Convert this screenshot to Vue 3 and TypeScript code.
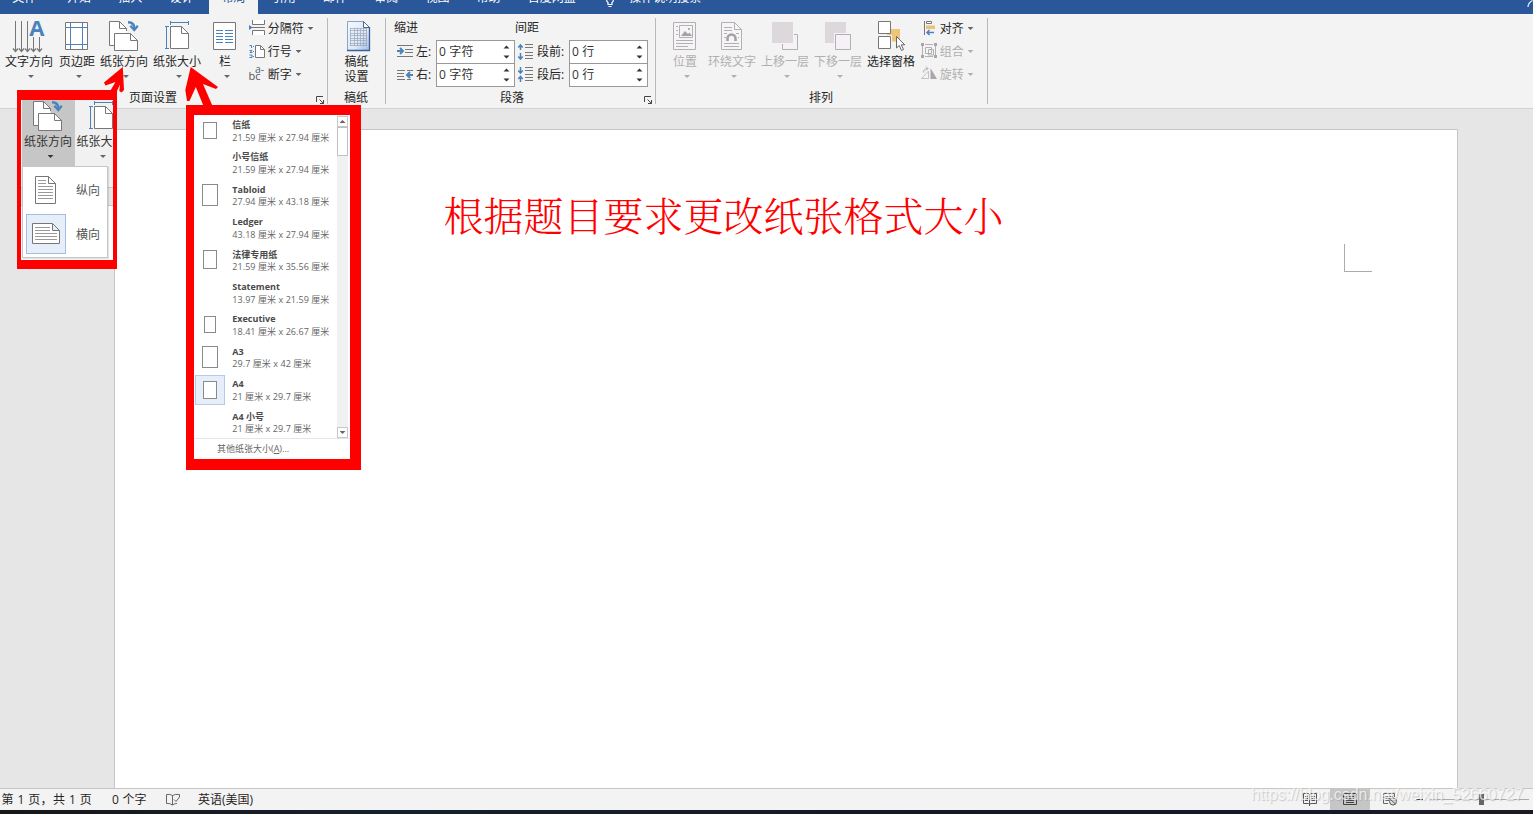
<script setup lang="ts">
interface Shape {
  d?: string
  text?: string
  x?: number
  y?: number
  size?: number
  bold?: boolean
  fill?: string
  stroke?: string
  w?: number
}
interface BigButton {
  label: string
  x: number
  w: number
  caret: boolean
  off?: boolean
  shapes: Shape[]
}
interface SmallButton {
  label: string
  box: string
  off?: boolean
  shapes: Shape[]
}

const G = '#777777'
const B = '#4a82bd'
const D = '#b3b0b3'

const tabs: string[] = ['文件', '开始', '插入', '设计', '布局', '引用', '邮件', '审阅', '视图', '帮助']

const orientation: Shape[] = [
  { d: 'M114 45.5H109.500V21.500H119.500L126.500 28.500V33.500H114.500V45.500Z', fill: '#fff' },
  { d: 'M114 45.500H109.500V21.500H119.500L126.500 28.500V31M119.500 21.500V28.500H126.500', stroke: G },
  { d: 'M114.500 33.500H130.500L137.500 40.500V50.500H114.500Z', fill: '#fff', stroke: G },
  { d: 'M130.500 33.500V40.500H137.500', stroke: G },
  { d: 'M128 22.300Q134.500 22.300 134.500 29', stroke: B, w: 2.4 },
  { d: 'M130.300 25.800L134.300 30L137.800 25.800', stroke: B, w: 2.2 },
]
const paperSize: Shape[] = [
  { d: 'M170 22.500H189M170.500 21V25M188.500 21V25M166.500 26V49M165 26.500H169M165 48.500H169', stroke: B },
  { d: 'M170.500 26.500H181.500L188.500 33.500V48.500H170.500Z', fill: '#fff', stroke: G },
  { d: 'M181.500 26.500V33.500H188.500', stroke: G },
]

const pageButtons: BigButton[] = [
  {
    label: '文字方向', x: 0, w: 58, caret: true,
    shapes: [
      { d: 'M15.500 21V51M21.500 21V51M27.500 21V51M33.500 37V51M39.500 37V51', stroke: G },
      { d: 'M13 48.500L15.500 51.500L18 48.500M19 48.500L21.500 51.500L24 48.500M25 48.500L27.500 51.500L30 48.500M31 48.500L33.500 51.500L36 48.500M37 48.500L39.500 51.500L42 48.500', stroke: G, w: 1.3 },
      { text: 'A', x: 29.2, y: 36, size: 22, bold: true, fill: B },
    ],
  },
  {
    label: '页边距', x: 58, w: 38, caret: true,
    shapes: [
      { d: 'M65.500 22.500H87.500V49.500H65.500Z', fill: '#fff', stroke: G },
      { d: 'M70.500 23V49M82.500 23V49M66 27.500H87M66 44.500H87', stroke: B },
    ],
  },
  { label: '纸张方向', x: 96, w: 56, caret: true, shapes: orientation },
  { label: '纸张大小', x: 152, w: 50, caret: true, shapes: paperSize },
  {
    label: '栏', x: 202, w: 46, caret: true,
    shapes: [
      { d: 'M213.500 22.500H235.500V49.500H213.500Z', fill: '#fff', stroke: G },
      { d: 'M216 30.500H223M225 30.500H233M216 33.500H223M225 33.500H233M216 36.500H223M225 36.500H233M216 39.500H223M225 39.500H233M216 42.500H223M225 42.500H233', stroke: B },
    ],
  },
]

const pageSmall: SmallButton[] = [
  {
    label: '分隔符', box: '248 17 19 23',
    shapes: [
      { d: 'M249 25L252.500 27.500L249 30Z', fill: B },
      { d: 'M252.500 20V24.500H264.500V20ZM252.500 35V30.500H264.500V35Z', fill: '#fff' },
      { d: 'M252.500 20V24.500H264.500V20M252.500 35V30.500H264.500V35M252 27.500H265', stroke: G },
    ],
  },
  {
    label: '行号', box: '248 40 19 23',
    shapes: [
      { d: 'M249.500 45.500H251.500V48M249.500 50.500H252L250 52.500H252.500M249.500 55H252V57.500H249.500M253 46.500H254M253 51.500H254M253 56.500H254', stroke: B },
      { d: 'M255.500 45.500H260.500L264.500 49.500V57.500H255.500Z', fill: '#fff', stroke: G },
      { d: 'M260.500 45.500V49.500H264.500', stroke: G },
    ],
  },
  {
    label: '断字', box: '248 63 19 23',
    shapes: [
      { text: 'bc', x: 248.5, y: 80, size: 11, fill: '#555' },
      { text: 'a-', x: 255, y: 73, size: 10.5, fill: '#4e5f74' },
    ],
  },
]

const arrangeButtons: BigButton[] = [
  {
    label: '位置', x: 664, w: 42, caret: true, off: true,
    shapes: [
      { d: 'M673.500 22.500H695.500V49.500H673.500Z', fill: '#f7f4f7', stroke: D },
      { d: 'M679.500 25.500H692.500V37.500H679.500Z', stroke: D },
      { d: 'M681 36L685 31L688 34L689.500 32.500L692 36Z', fill: '#a5a2a5' },
      { d: 'M688 28H690V30H688Z', fill: D },
      { d: 'M676 26.500H678M676 30.500H678M676 34.500H678M676 40.500H693M676 43.500H693M676 46.500H688', stroke: D },
    ],
  },
  {
    label: '环绕文字', x: 706, w: 52, caret: true, off: true,
    shapes: [
      { d: 'M721.500 22.500H734.500L741.500 29.500V49.500H721.500Z', fill: '#f7f4f7', stroke: D },
      { d: 'M734.500 22.500V29.500H741.500M724 27.500H732M724 30.500H732M724 33.500H727M736 33.500H739M724 43.500H739M724 46.500H739M724 37.500H726M738 37.500H739', stroke: D },
      { d: 'M727.500 41V38.500A4 4 0 0 1 735.500 38.500V41', stroke: '#a5a2a5', w: 2.6 },
    ],
  },
  {
    label: '上移一层', x: 758, w: 54, caret: true, off: true,
    shapes: [
      { d: 'M782.500 34.500H797.500V49.500H782.500Z', fill: '#f6f0f7', stroke: D },
      { d: 'M771 21H794V44H771Z', fill: '#f3f3f3' },
      { d: 'M772 22H793V43H772Z', fill: '#dcd8dc' },
    ],
  },
  {
    label: '下移一层', x: 812, w: 52, caret: true, off: true,
    shapes: [
      { d: 'M825 22H846V43H825Z', fill: '#dcd8dc' },
      { d: 'M834 33H852V51H834Z', fill: '#f3f3f3' },
      { d: 'M835.500 34.500H850.500V49.500H835.500Z', fill: '#f6f0f7', stroke: D },
    ],
  },
  {
    label: '选择窗格', x: 864, w: 54, caret: false,
    shapes: [
      { d: 'M887 29H900V41.500H887Z', fill: '#edc57a' },
      { d: 'M877 35H892V50H877Z', fill: '#f3f3f3' },
      { d: 'M878.500 21.500H890.500V33.500H878.500ZM878.500 36.500H890.500V48.500H878.500Z', fill: '#fff', stroke: G },
      { d: 'M896.500 36.500V48L899.300 45.500L901.500 50.500L903.500 49.500L901.300 44.800H904.800Z', fill: '#fff', stroke: '#666' },
    ],
  },
]

const arrangeSmall: SmallButton[] = [
  {
    label: '对齐', box: '920 17 19 23',
    shapes: [
      { d: 'M924.500 21V35', stroke: G },
      { d: 'M926.500 21.500H931.500V23.500H926.500Z', fill: '#fff', stroke: G },
      { d: 'M926 25.500H935V29H926Z', fill: '#edc078' },
      { d: 'M927 32.500H934M929.500 30L927 32.500L929.500 35', stroke: B, w: 1.5 },
    ],
  },
  {
    label: '组合', box: '920 40 19 23', off: true,
    shapes: [
      { d: 'M922.500 46V55M935.500 46V55M925 44.500H933M925 56.500H933M925.500 47.500H931.500V53.500H925.500ZM928.500 49.500H933.500V55H928.500Z', stroke: D },
      { d: 'M921 43H924V46H921ZM934 43H937V46H934ZM921 55H924V58H921ZM934 55H937V58H934Z', fill: '#a9a6a9' },
    ],
  },
  {
    label: '旋转', box: '920 63 19 23', off: true,
    shapes: [
      { d: 'M921.500 78.500L928.500 71V78.500Z', stroke: '#c4c0c4' },
      { d: 'M930.500 68L937 79H930.500Z', fill: '#a9a6a9' },
      { d: 'M923.500 72.500Q923.500 68.500 928 68.500M926 66.500L928 68.500L926 70.500', stroke: D },
    ],
  },
]

interface Field { side: string; sideIcon: Shape[]; box1: string; sp: string; spIcon: Shape[]; box2: string }
const fields: Field[] = [
  {
    side: '左:', box1: '397 40 17 22', sp: '段前:', box2: '517 40 17 22',
    sideIcon: [
      { d: 'M397 44.500H413M405 48.500H413M405 51.500H413M397 55.500H413', stroke: G },
      { d: 'M397 50H402.500M400 47L403 50L400 53', stroke: B, w: 2 },
    ],
    spIcon: [
      { d: 'M520.500 44V49M518.300 46.500L520.500 44L522.700 46.500M520.500 52V58M518.300 55.500L520.500 58L522.700 55.500', stroke: B, w: 1.5 },
      { d: 'M525 43.500H533M525 46.500H533M525 51.500H533M525 54.500H533M525 57.500H533', stroke: G },
    ],
  },
  {
    side: '右:', box1: '397 63 17 22', sp: '段后:', box2: '517 63 17 22',
    sideIcon: [
      { d: 'M397 69.500H405M397 72.500H404M397 75.500H404M397 78.500H405M407 69.500H413M407 78.500H411', stroke: G },
      { d: 'M413 74H407.500M410 71L407 74L410 77', stroke: B, w: 2 },
    ],
    spIcon: [
      { d: 'M520.500 66V72M518.300 69.500L520.500 72L522.700 69.500M520.500 75.500V81M518.300 78L520.500 75.500L522.700 78', stroke: B, w: 1.5 },
      { d: 'M525 66.500H533M525 69.500H533M525 73.500H533M525 76.500H533M525 79.500H533', stroke: G },
    ],
  },
]

interface Paper { name: string; dim: string; w: number; h: number; on?: boolean }
const papers: Paper[] = [
  { name: '信纸', dim: '21.59 厘米 x 27.94 厘米', w: 14, h: 17 },
  { name: '小号信纸', dim: '21.59 厘米 x 27.94 厘米', w: 0, h: 0 },
  { name: 'Tabloid', dim: '27.94 厘米 x 43.18 厘米', w: 16, h: 22 },
  { name: 'Ledger', dim: '43.18 厘米 x 27.94 厘米', w: 0, h: 0 },
  { name: '法律专用纸', dim: '21.59 厘米 x 35.56 厘米', w: 14, h: 19 },
  { name: 'Statement', dim: '13.97 厘米 x 21.59 厘米', w: 0, h: 0 },
  { name: 'Executive', dim: '18.41 厘米 x 26.67 厘米', w: 12, h: 17 },
  { name: 'A3', dim: '29.7 厘米 x 42 厘米', w: 16, h: 22 },
  { name: 'A4', dim: '21 厘米 x 29.7 厘米', w: 14, h: 18, on: true },
  { name: 'A4 小号', dim: '21 厘米 x 29.7 厘米', w: 0, h: 0 },
]

const gridV = [349, 353, 356, 359, 362, 365].map((x) => `M${x}.500 28V46`).join('')
const gridH = [28, 30, 33, 35, 38, 40, 43, 45].map((y) => `M349 ${y}.500H366`).join('')
</script>

<template>
  <div class="app">
    <nav class="tabs">
      <span v-for="t in tabs" :key="t" class="tab" :class="{ active: t === '布局' }"><b>{{ t }}</b></span>
      <span class="tab wide"><b>百度网盘</b></span>
      <svg class="bulb" width="12" height="14" viewBox="0 0 12 14"><path d="M2.500 0Q3 2 4 2.500V4.500H8V2.500Q9 2 9.500 0M4.500 6.500H7.500" fill="none" stroke="#fff" stroke-width="1.2" /></svg>
      <span class="tab tell"><b>操作说明搜索</b></span>
      <svg class="share" width="6" height="14" viewBox="0 0 6 14"><path d="M1 7Q1 3 5.500 0.500" fill="none" stroke="#dfe8f5" stroke-width="1.3" /></svg>
    </nav>

    <section class="ribbon">
      <div class="group g1">
        <div class="tools">
          <div v-for="b in pageButtons" :key="b.label" class="big" :style="{ width: b.w + 'px' }">
            <svg :width="b.w" height="38" :viewBox="`${b.x} 16 ${b.w} 38`">
              <template v-for="(s, i) in b.shapes" :key="i">
                <text v-if="s.text" :x="s.x" :y="s.y" :font-size="s.size" :font-weight="s.bold ? 700 : 400" :fill="s.fill">{{ s.text }}</text>
                <path v-else :d="s.d" :fill="s.fill || 'none'" :stroke="s.stroke || 'none'" :stroke-width="s.w || 1" />
              </template>
            </svg>
            <span>{{ b.label }}</span>
            <i class="caret"></i>
          </div>
          <div class="smalls">
            <div v-for="b in pageSmall" :key="b.label" class="small">
              <svg width="19" height="23" :viewBox="b.box">
                <template v-for="(s, i) in b.shapes" :key="i">
                  <text v-if="s.text" :x="s.x" :y="s.y" :font-size="s.size" :fill="s.fill">{{ s.text }}</text>
                  <path v-else :d="s.d" :fill="s.fill || 'none'" :stroke="s.stroke || 'none'" :stroke-width="s.w || 1" />
                </template>
              </svg>
              <span>{{ b.label }}</span>
              <i class="caret"></i>
            </div>
          </div>
        </div>
        <div class="caption">
          <span>页面设置</span>
          <svg class="launch" width="9" height="9" viewBox="0 0 9 9"><path d="M.5 6V.5H7M3.500 3.500L7.500 7.500M7.500 4V7.500H4" fill="none" stroke="#444" /></svg>
        </div>
      </div>

      <div class="group g2">
        <div class="tools">
          <div class="big draft">
            <svg width="56" height="38" viewBox="328 16 56 38">
              <defs>
                <linearGradient id="sheet" x1="0" y1="0" x2="1" y2="1">
                  <stop offset="0" stop-color="#f4f8fe" /><stop offset=".6" stop-color="#dce8f8" /><stop offset="1" stop-color="#9dbbe6" />
                </linearGradient>
              </defs>
              <path d="M346.500 21.500H362.500L368.500 27.500V50.500H346.500Z" fill="url(#sheet)" stroke="#8ba4cb" />
              <path :d="gridV + gridH" fill="none" stroke="#9aa5b6" stroke-width=".7" />
              <path d="M362.500 21.500V27.500H368.500Z" fill="#fff" stroke="#4d6791" />
              <path d="M368.500 27V50.500H346" fill="none" stroke="#3f5f98" stroke-width="1.300" />
            </svg>
            <span>稿纸<br>设置</span>
          </div>
        </div>
        <div class="caption"><span>稿纸</span></div>
      </div>

      <div class="group g3">
        <div class="tools para">
          <div class="heads"><span>缩进</span><span>间距</span></div>
          <div v-for="f in fields" :key="f.side" class="field">
            <svg class="ic" width="17" height="22" :viewBox="f.box1">
              <path v-for="(s, i) in f.sideIcon" :key="i" :d="s.d" fill="none" :stroke="s.stroke" :stroke-width="s.w || 1" />
            </svg>
            <label class="a">{{ f.side }}</label>
            <div class="spin">0 字符<svg width="7" height="16" viewBox="0 0 7 16"><path d="M.5 4.500L3.500 1.500L6.500 4.500ZM.5 11.500L3.500 14.500L6.500 11.500Z" fill="#333" /></svg></div>
            <svg class="ic ic2" width="17" height="22" :viewBox="f.box2">
              <path v-for="(s, i) in f.spIcon" :key="i" :d="s.d" fill="none" :stroke="s.stroke" :stroke-width="s.w || 1" />
            </svg>
            <label class="b">{{ f.sp }}</label>
            <div class="spin">0 行<svg width="7" height="16" viewBox="0 0 7 16"><path d="M.5 4.500L3.500 1.500L6.500 4.500ZM.5 11.500L3.500 14.500L6.500 11.500Z" fill="#333" /></svg></div>
          </div>
        </div>
        <div class="caption">
          <span>段落</span>
          <svg class="launch" width="9" height="9" viewBox="0 0 9 9"><path d="M.5 6V.5H7M3.500 3.500L7.500 7.500M7.500 4V7.500H4" fill="none" stroke="#444" /></svg>
        </div>
      </div>

      <div class="group g4">
        <div class="tools">
          <div v-for="b in arrangeButtons" :key="b.label" class="big" :class="{ off: b.off }" :style="{ width: b.w + 'px' }">
            <svg :width="b.w" height="38" :viewBox="`${b.x} 16 ${b.w} 38`">
              <path v-for="(s, i) in b.shapes" :key="i" :d="s.d" :fill="s.fill || 'none'" :stroke="s.stroke || 'none'" :stroke-width="s.w || 1" />
            </svg>
            <span>{{ b.label }}</span>
            <i v-if="b.caret" class="caret"></i>
          </div>
          <div class="smalls right">
            <div v-for="b in arrangeSmall" :key="b.label" class="small" :class="{ off: b.off }">
              <svg width="19" height="23" :viewBox="b.box">
                <path v-for="(s, i) in b.shapes" :key="i" :d="s.d" :fill="s.fill || 'none'" :stroke="s.stroke || 'none'" :stroke-width="s.w || 1" />
              </svg>
              <span>{{ b.label }}</span>
              <i class="caret"></i>
            </div>
          </div>
        </div>
        <div class="caption"><span>排列</span></div>
      </div>
    </section>

    <main class="workspace">
      <article class="page">
        <h1>根据题目要求更改纸张格式大小</h1>
        <div class="corner"></div>
      </article>
    </main>

    <footer class="status">
      <span class="s1">第 1 页，共 1 页</span>
      <span class="s2">0 个字</span>
      <svg class="proof" width="16" height="14" viewBox="0 0 16 14"><path d="M6.500 2.500Q4 .8 .500 1.500V10.500Q4 10 6.500 12Q8 10.500 11 10.500M6.500 2.500V12M6.500 2.500Q9 .8 13.500 1.500V4M8 6.500L10 8.500L13.500 4" fill="none" stroke="#666" /></svg>
      <span class="s3">英语(美国)</span>
      <div class="views">
        <span class="view"><svg width="14" height="14" viewBox="0 0 14 14"><path d="M.5 1.500H5.500L6.500 2.500L8 1.500H13.500V11.500H8L6.500 12.500L5.500 11.500H.5ZM6.500 2V14M2 4.500H5M2 6.500H5M2 8.500H5M8.500 4.500H12M8.500 6.500H12M8.500 8.500H12" fill="none" stroke="#555" /></svg></span>
        <span class="view on"><svg width="14" height="14" viewBox="0 0 14 14"><path d="M.5 1V12.500H13.500V1.500H.5M3 4.500H11M3 6.500H11M3 8.500H11M3 10.500H11" fill="none" stroke="#444" /></svg></span>
        <span class="view"><svg width="14" height="14" viewBox="0 0 14 14"><path d="M5 11.500H.5V1.500H11.500V5M2.500 4.500H5M6.500 4.500H10M2.500 6.500H7M2.500 8.500H6" fill="none" stroke="#666" /><circle cx="10" cy="9.500" r="3.500" fill="#ddd" stroke="#555" /><path d="M8 8L12 11.500" stroke="#555" /></svg></span>
        <i class="minus"></i>
        <div class="slider"><i></i></div>
      </div>
    </footer>
    <div class="edge"></div>

    <div class="mark">https://blog.csdn.net/weixin_52660727</div>

    <svg class="arrows" width="130" height="50" viewBox="95 60 130 50">
      <path d="M122.800 67L104 82.500L105.500 85.500L115.500 82L109 93H116L120 84.500L119.300 91L121.500 92.500L124 90Z" fill="#f00" />
      <path d="M190.700 67L185.300 90L187 101H189.500L195.800 87L203.500 106H212.500L203 84L216 89L218 87Z" fill="#f00" />
    </svg>

    <div class="frame orient">
      <div class="strip">
        <div class="big pressed">
          <svg width="53" height="34" viewBox="98 20 53 34">
            <path v-for="(s, i) in orientation" :key="i" :d="s.d" :fill="s.fill || 'none'" :stroke="s.stroke || 'none'" :stroke-width="s.w || 1" />
          </svg>
          <span>纸张方向</span><i class="caret"></i>
        </div>
        <div class="big second">
          <svg width="52" height="34" viewBox="151 20 52 34">
            <path v-for="(s, i) in paperSize" :key="i" :d="s.d" :fill="s.fill || 'none'" :stroke="s.stroke || 'none'" :stroke-width="s.w || 1" />
          </svg>
          <span>纸张大小</span><i class="caret"></i>
        </div>
      </div>
      <div class="menu">
        <div class="opt">
          <div class="cell"><svg width="38" height="38" viewBox="0 0 38 38"><path d="M8.500 5.500H21.500L28.500 12.500V32.500H8.500ZM21.500 5.500V12.500H28.500" fill="#fff" stroke="#777" /><path d="M11 9.500H19M11 12.500H19M11 15.500H26M11 18.500H26M11 21.500H26M11 24.500H26M11 27.500H26" stroke="#999" /></svg></div>
          <span>纵向</span>
        </div>
        <div class="opt">
          <div class="cell on"><svg width="38" height="38" viewBox="0 0 38 38"><path d="M5.500 8.500H25.500L32.500 15.500V28.500H5.500ZM25.500 8.500V15.500H32.500" fill="#fff" stroke="#777" /><path d="M8 12.500H23M8 15.500H23M8 18.500H30M8 21.500H30M8 24.500H30" stroke="#999" /></svg></div>
          <span>横向</span>
        </div>
      </div>
    </div>

    <div class="frame sizes">
      <div class="list">
        <div class="rows">
          <div v-for="p in papers" :key="p.name" class="row">
            <div class="thumb" :class="{ on: p.on }"><i v-if="p.w" :style="{ width: p.w + 'px', height: p.h + 'px' }"></i></div>
            <div class="desc"><b>{{ p.name }}</b><span>{{ p.dim }}</span></div>
          </div>
        </div>
        <div class="scroll">
          <span class="btn"><i class="caret up"></i></span>
          <span class="knob"></span>
          <span class="btn end"><i class="caret"></i></span>
        </div>
      </div>
      <div class="more">其他纸张大小(<u>A</u>)...</div>
    </div>
  </div>
</template>

<style>
html, body { margin: 0; overflow: hidden; }
</style>

<style scoped>
.app { position: relative; width: 1533px; height: 814px; display: flex; flex-direction: column; overflow: hidden; background: #e6e6e6; font-family: "Open Sans", "Noto Sans CJK SC", sans-serif; font-size: 12px; line-height: 16px; color: #262626; }
.app * { box-sizing: border-box; }
svg { display: block; flex: none; overflow: visible; }

.tabs { height: 14px; background: #2a579a; display: flex; padding-left: 2px; overflow: hidden; flex: none; }
.tab { width: 51.2px; display: flex; justify-content: center; color: #fff; height: 14px; white-space: nowrap; flex: none; }
.tab:first-child { width: 51.500px; padding-right: 7px; }
.tab b { font-weight: 400; margin-top: -10px; }
.tab.active { color: #2a579a; background: #f3f3f3; width: 49px; margin: 0 .2px 0 2px; }
.tab.wide { width: 75px; }
.bulb { margin-left: 15px; }
.tell { width: 72px; margin-left: 13px; }
.share { margin-left: auto; }

.ribbon { height: 95px; background: #f3f3f3; border-bottom: 1px solid #d2d2d2; display: flex; flex: none; }
.group { height: 94px; display: flex; flex-direction: column; position: relative; flex: none; }
.group::after { content: ""; position: absolute; right: 0; top: 4px; height: 86px; width: 1px; background: #b9b9b9; }
.g1 { width: 328px; }
.g2 { width: 58px; }
.g3 { width: 270px; }
.g4 { width: 332px; }
.tools { display: flex; height: 74px; padding-top: 2px; }
.g4 .tools { padding-left: 8px; }
.big { display: flex; flex-direction: column; align-items: center; white-space: nowrap; flex: none; text-align: center; }
.big .caret { margin: 5px 0 0 4px; }
.big span { line-height: 16px; }
.caret { width: 6px; height: 3px; background: #666; clip-path: polygon(0 0, 100% 0, 50% 100%); flex: none; display: block; }
.caret.up { clip-path: polygon(0 100%, 100% 100%, 50% 0); }
.off { color: #b0b0b0; }
.off .caret { background: #b0b0b0; }
.smalls { padding-top: 1px; }
.right { padding-left: 2px; }
.small { display: flex; align-items: center; height: 23px; white-space: nowrap; }
.small span { margin-left: .7px; }
.small .caret { margin-left: 3.800px; }
.caption { display: flex; height: 20px; line-height: 20px; }
.caption span { flex: 1; text-align: center; padding-right: 2px; }
.g1 .caption span { padding: 0; }
.launch { margin: 8px 3px 0 4px; }
.g1 .launch { margin-left: 10px; }
.draft { width: 57px; }
.draft span { line-height: 15px; }
.tools.para { display: block; padding-top: 6px; }
.heads { display: flex; padding-left: 8px; height: 20px; line-height: 16px; }
.heads span { width: 121px; }
.field { display: flex; align-items: center; height: 23px; padding-left: 11px; white-space: nowrap; }
.a { width: 22px; padding-left: 2px; }
.b { width: 35px; padding-left: 3px; }
.ic2 { margin-left: 2px; }
.spin { width: 79px; height: 24px; margin: 0 0 -1px; border: 1px solid #999; background: #fff; display: flex; align-items: center; justify-content: space-between; padding: 0 4px 0 2px; color: #333; letter-spacing: .15px; flex: none; }

.workspace { height: 679px; padding: 20px 0 0 114px; flex: none; }
.page { position: relative; width: 1344px; height: 659px; background: #fff; border: 1px solid #c6c6c6; border-bottom: 0; padding: 55px 0 0 328.500px; }
.page h1 { margin: 0; color: #f00; font-family: "Noto Serif CJK SC", "Noto Sans CJK SC", serif; font-weight: 300; font-size: 40px; line-height: 58px; letter-spacing: 0; white-space: nowrap; }
.corner { position: absolute; left: 1229px; top: 114px; width: 28px; height: 28px; border: solid #ababab; border-width: 0 0 1px 1px; }

.status { height: 22px; border-top: 1px solid #c6c6c6; background: #f3f3f3; display: flex; align-items: center; white-space: nowrap; flex: none; }
.s1 { width: 110px; padding-left: 1.500px; letter-spacing: .4px; }
.s2 { width: 56px; padding-left: 2px; letter-spacing: .2px; }
.s3 { padding-left: 16px; }
.views { margin-left: auto; display: flex; align-items: center; height: 21px; padding-right: 4px; }
.view { width: 40px; height: 21px; display: flex; align-items: center; justify-content: center; }
.view svg { margin-top: -2px; }
.view.on { background: #c6c6c6; }
.minus { width: 7px; height: 1px; background: #333; margin: 0 6px; }
.slider { width: 100px; height: 1px; background: #aaa; position: relative; }
.slider i { position: absolute; left: 50px; top: -5px; width: 5px; height: 11px; background: #666; }
.edge { height: 4px; background: linear-gradient(90deg, #171719, #15202e 25%, #121923 60%, #15182b 85%, #1b1b20); flex: none; }
.mark { position: absolute; left: 1251px; top: 785px; font: 16px/20px "Liberation Sans", Arial, sans-serif; color: rgba(255, 255, 255, .7); text-shadow: 1px 1px 1px rgba(120, 120, 120, .35); white-space: nowrap; }
.arrows { position: absolute; left: 95px; top: 60px; }

.frame { position: absolute; border: solid #f00; overflow: hidden; }
.orient { left: 16.500px; top: 90px; width: 100.500px; height: 179px; border-width: 10px 4px 9px 4px; background: linear-gradient(#f1f1f1 87px, #c6c6c6 87px 88px, #e6e6e6 88px 105px, #c6c6c6 105px 106px, #fff 106px); }
.orient { left: 17px; width: 100px; }
.strip { display: flex; height: 66px; padding-left: 1px; }
.strip .big { height: 66px; color: #333; }
.strip .big span { margin-left: -1px; }
.pressed { width: 53px; background: #c6c6c6; }
.pressed .caret { background: #333; }
.second { width: 52px; }
.menu { width: 86px; height: 92px; margin-left: 1px; border: 1px solid #c6c6c6; background: #fff; padding: 3px 3px; box-shadow: 1px 1px 1px rgba(0, 0, 0, .1); }
.opt { height: 44px; display: flex; align-items: flex-start; color: #555; }
.opt span { margin: 12.500px 0 0 10px; }
.cell { width: 40px; height: 40px; border: 1px solid transparent; flex: none; }
.cell.on { border-color: #a3bde3; background: #e6eefa; }

.sizes { left: 186px; top: 105px; width: 175px; height: 365px; border-width: 10px 11px 11px 8px; background: #fff; font-size: 9px; color: #666; }
.list { display: flex; height: 324px; border-bottom: 1px solid #e6e6e6; }
.rows { width: 143px; padding-top: .4px; }
.row { display: flex; height: 32.400px; padding-left: 1px; }
.thumb { width: 30px; height: 30px; display: flex; align-items: center; justify-content: center; border: 1px solid transparent; flex: none; }
.thumb.on { border-color: #b5cbea; background: #e6eefa; }
.thumb i { border: 1px solid #8a8a8a; background: #fff; }
.desc { padding: 3.600px 0 0 7.300px; white-space: nowrap; }
.desc b, .desc span { display: block; line-height: 12.600px; }
.desc span { letter-spacing: .06px; }
.desc b { color: #4a4a4a; }
.scroll { width: 11px; background: #f1f1f1; display: flex; flex-direction: column; padding-top: 1px; }
.btn { height: 11px; border: 1px solid #c8c8c8; background: #fff; display: flex; align-items: center; justify-content: center; }
.btn.end { margin-top: auto; }
.knob { height: 29px; border: 1px solid #c0c0c0; background: #fff; }
.more { padding-left: 23px; line-height: 19px; }
</style>
